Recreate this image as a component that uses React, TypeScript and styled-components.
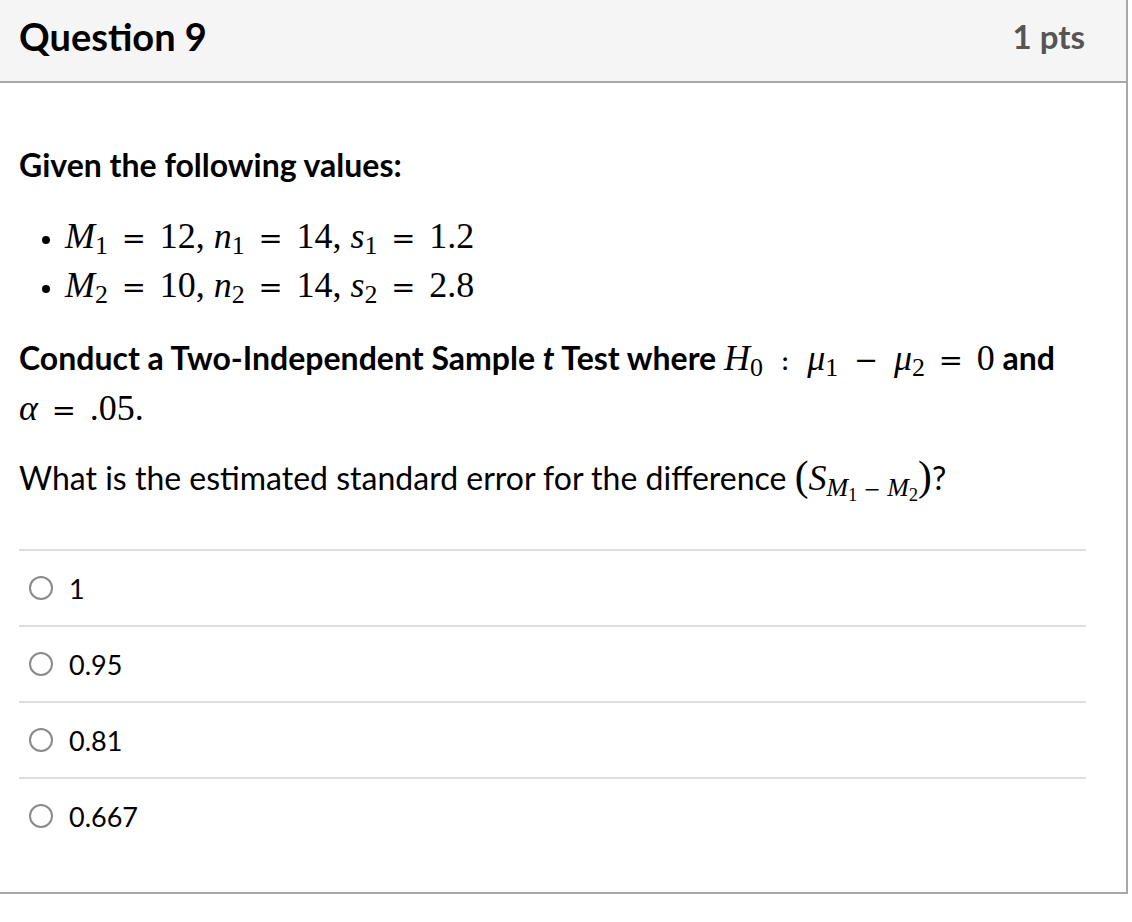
import styled, { createGlobalStyle } from 'styled-components';

const GlobalStyle = createGlobalStyle`
	body {
		margin: 0;
		background: #ffffff;
		font-family: Lato, "Noto Sans", sans-serif;
		color: #000000;
	}
`;

const Card = styled.div`
	width: 1126px;
	border-right: 2px solid #a8a8a8;
	border-bottom: 2px solid #a8a8a8;
	background: #ffffff;
`;

const Header = styled.div`
	height: 72px;
	background: #f5f5f5;
	border-bottom: 2px solid #a8a8a8;
	display: flex;
	align-items: center;
	justify-content: space-between;
	padding: 0 41px 9px 19px;
`;

const Title = styled.h2`
	margin: 0;
	font-size: 38px;
	font-weight: 700;
	color: #000000;
`;

const Points = styled.span`
	font-size: 33px;
	font-weight: 700;
	color: #555555;
`;

const Body = styled.div`
	padding: 61px 40px 39px 19px;
`;

const Para = styled.p<{ $bold?: boolean; $gap?: number }>`
	margin: 0 0 ${({ $gap }) => $gap ?? 20}px;
	font-size: 32px;
	line-height: 50px;
	font-weight: ${({ $bold }) => ($bold ? 700 : 400)};
`;

const Lead = styled(Para)`
	line-height: 42px;
`;

const ValueList = styled.ul`
	margin: 0 0 22px;
	padding: 0 0 0 46px;
	font-size: 28px;
	line-height: 49px;
`;

const ValueItem = styled.li`
	&::marker {
		font-size: 24px;
	}
`;

const Math = styled.span`
	font-family: "Liberation Serif", "DejaVu Serif", serif;
	font-size: 36px;
	font-weight: 400;
	line-height: 1;
	white-space: nowrap;
`;

const Var = styled.i`
	font-style: italic;
`;

const Sub = styled.sub`
	font-size: 0.72em;
	font-style: normal;
	vertical-align: -0.25em;
	line-height: 0;
`;

const Op = styled.span<{ $space?: number }>`
	font-family: "DejaVu Serif", serif;
	font-size: 0.8em;
	margin: 0 ${({ $space }) => $space ?? 0.48}em;
`;

const Paren = styled.span`
	font-size: 1.15em;
`;

const Answers = styled.div`
	margin-top: 46px;
`;

const AnswerRow = styled.label`
	display: flex;
	align-items: center;
	gap: 16px;
	height: 74px;
	border-top: 2px solid #dddddd;
	padding-left: 10px;
	font-size: 27px;
`;

const Radio = styled.span`
	width: 20px;
	height: 20px;
	border: 2px solid #8a8a8a;
	border-radius: 50%;
	flex-shrink: 0;
`;

const answers = ['1', '0.95', '0.81', '0.667'];

function App() {
	return (
		<>
			<GlobalStyle />
			<Card>
				<Header>
					<Title>Question 9</Title>
					<Points>1 pts</Points>
				</Header>
				<Body>
					<Lead $bold $gap={27}>Given the following values:</Lead>
					<ValueList>
						<ValueItem>
							<Math>
								<Var>M</Var><Sub>1</Sub><Op>=</Op>12, <Var>n</Var><Sub>1</Sub><Op>=</Op>14, <Var>s</Var><Sub>1</Sub><Op>=</Op>1.2
							</Math>
						</ValueItem>
						<ValueItem>
							<Math>
								<Var>M</Var><Sub>2</Sub><Op>=</Op>10, <Var>n</Var><Sub>2</Sub><Op>=</Op>14, <Var>s</Var><Sub>2</Sub><Op>=</Op>2.8
							</Math>
						</ValueItem>
					</ValueList>
					<Para $bold>
						Conduct a Two-Independent Sample <i>t</i> Test where{' '}
						<Math>
							<Var>H</Var><Sub>0</Sub><Op $space={0.6}>:</Op><Var>μ</Var><Sub>1</Sub><Op $space={0.55}>−</Op><Var>μ</Var><Sub>2</Sub><Op>=</Op>0
						</Math>{' '}
						and{' '}
						<Math>
							<Var>α</Var><Op>=</Op>.05.
						</Math>
					</Para>
					<Para $gap={0}>
						What is the estimated standard error for the difference{' '}
						<Math>
							<Paren>(</Paren>
							<Var>S</Var>
							<Sub>
								<Var>M</Var><Sub>1</Sub><Op $space={0.3}>−</Op><Var>M</Var><Sub>2</Sub>
							</Sub>
							<Paren>)</Paren>
						</Math>
						?
					</Para>
					<Answers>
						{answers.map((a) => (
							<AnswerRow key={a}>
								<Radio />
								{a}
							</AnswerRow>
						))}
					</Answers>
				</Body>
			</Card>
		</>
	);
}

export default App;
